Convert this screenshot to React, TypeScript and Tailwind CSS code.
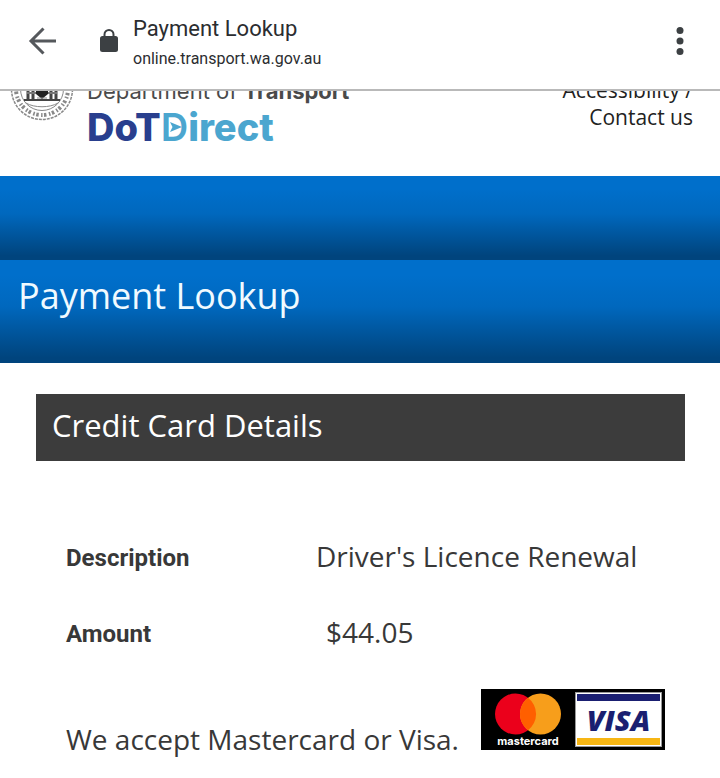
import type { ReactNode } from "react";

const DetailRow = ({
  label,
  children,
}: {
  label: string;
  children: ReactNode;
}) => {
  return (
    <div className="flex h-[76px] items-center">
      <dt className="w-[250px] shrink-0 pt-1 font-['Roboto',sans-serif] text-[24px] font-bold">
        {label}
      </dt>
      <dd>{children}</dd>
    </div>
  );
};

const BrowserBar = () => {
  return (
    <header className="flex h-[91px] items-center border-b-2 border-[#b9b9b9] bg-white pb-2 pl-7 pr-6 font-['Roboto',sans-serif] text-[#2b2d30]">
      <button type="button" aria-label="Back">
        <svg width="28" height="28" viewBox="0 0 28 28" fill="none" stroke="#55585c" strokeWidth="3">
          <path d="M28 14H3M15.500 1.500 3 14l12.500 12.500" />
        </svg>
      </button>
      <svg className="ml-11 shrink-0" width="18" height="24" viewBox="0 0 18 24" aria-hidden="true">
        <path d="M4.500 9V5.500a4.500 4.500 0 0 1 9 0V9" fill="none" stroke="#3c4043" strokeWidth="2" />
        <rect y="7" width="18" height="16" rx="2.500" fill="#3c4043" />
      </svg>
      <div className="ml-[15px] flex-1 pt-1">
        <h1 className="text-[22px] leading-8">Payment Lookup</h1>
        <p className="text-[16px] leading-7">online.transport.wa.gov.au</p>
      </div>
      <button type="button" aria-label="Menu" className="px-3">
        <svg width="8" height="28" viewBox="0 0 8 28" fill="#3c4043">
          <circle cx="4" cy="3.500" r="3.500" />
          <circle cx="4" cy="14" r="3.500" />
          <circle cx="4" cy="24.500" r="3.500" />
        </svg>
      </button>
    </header>
  );
};

const Crest = () => {
  return (
    <svg width="64" height="64" viewBox="0 0 64 64" fill="none" aria-hidden="true">
      <circle cx="32" cy="32" r="30.500" stroke="#888" strokeWidth="1.500" strokeDasharray="3 1" />
      <circle cx="32" cy="32" r="26" stroke="#888" strokeWidth="4" strokeDasharray="1.500 2.500 2.500 1.500" />
      <circle cx="32" cy="32" r="21.500" stroke="#888" strokeWidth="1" />
      <path d="M14 43h36" stroke="#444" strokeWidth="2" />
      <path d="M18 32v10M23 31v11M41 31v11M46 32v10" stroke="#444" strokeWidth="3" />
      <path d="M17 36h9M38 36h9" stroke="#777" strokeWidth="2" />
      <path d="M26 32h12v5l-6 5-6-5z" fill="#222" />
      <path d="M27 41h10M16 46c8 5 24 5 32 0" stroke="#888" strokeWidth="1" />
    </svg>
  );
};

const SiteHeader = () => {
  return (
    <div className="flex h-[85px] items-end justify-between overflow-hidden pl-[10px] pr-[27px]">
      <div className="flex items-end">
        <div className="mb-[55px]">
          <Crest />
        </div>
        <div className="ml-[13px] pb-[29px]">
          <p className="pb-1 text-[22px] leading-6 font-['Inter',sans-serif] text-[#4a4a4a]">
            Department of <b>Transport</b>
          </p>
          <p className="flex font-['Inter',sans-serif] text-[38px] leading-10 font-bold text-[#4ba6cf]">
            <span className="font-extrabold text-[#293f8e]">DoT</span>
            <span className="relative font-semibold">
              D
              <svg className="absolute left-[9px] top-[15px]" width="12" height="10" viewBox="0 0 12 10" aria-hidden="true">
                <path d="M0 0 12 5 0 10l2.500-5z" fill="#4ba6cf" />
              </svg>
            </span>
            <span className="font-extrabold">irect</span>
          </p>
        </div>
      </div>
      <nav className="pb-[45px] text-right text-[21px] leading-[27px] text-[#222]">
        <a href="#accessibility" className="block">Accessibility /</a>
        <a href="#contact" className="block">Contact us</a>
      </nav>
    </div>
  );
};

const CardLogos = () => {
  return (
    <div className="flex h-[61px] w-[184px] bg-black font-['Inter',sans-serif]">
      <div className="flex w-[94px] flex-col items-center pt-1">
        <svg width="66" height="42" viewBox="0 0 66 42" aria-hidden="true">
          <circle cx="20.500" cy="21" r="20.500" fill="#eb001b" />
          <circle cx="45.500" cy="21" r="20.500" fill="#f79e1b" />
          <path d="M33 4.700a20.500 20.500 0 0 1 0 32.600 20.500 20.500 0 0 1 0-32.600z" fill="#ff5f00" />
        </svg>
        <span className="text-[11px] leading-3 font-bold text-white">mastercard</span>
      </div>
      <div className="my-[3px] flex w-[87px] flex-col justify-between border border-[#999] bg-white p-px">
        <div className="h-[7px] bg-[#1a1f71]" />
        <span className="text-center font-['Open_Sans',sans-serif] text-[29px] leading-8 font-extrabold italic text-[#1a1f71]">
          VISA
        </span>
        <div className="h-[7px] bg-[#f7b614]" />
      </div>
    </div>
  );
};

export default function App() {
  return (
    <div className="min-h-screen bg-white font-['Open_Sans','Noto_Sans',sans-serif] text-[#383838]">
      <BrowserBar />
      <SiteHeader />
      <div className="h-[84px] bg-linear-to-b from-[#006fcb] from-15% via-[#0068be] via-45% to-[#00447d] to-95%" />
      <div className="h-[103px] bg-linear-to-b from-[#006fcb] from-15% via-[#0068be] via-45% to-[#00447d] to-95% px-[18px] pt-3">
        <h2 className="text-[36px] leading-[48px] text-[#f0faff]">Payment Lookup</h2>
      </div>
      <main className="pl-9 pr-[35px] pt-[31px]">
        <h3 className="h-[67px] bg-[#3c3c3c] px-4 pt-2 text-[31px] leading-[46px] text-white">
          Credit Card Details
        </h3>
        <dl className="mt-[57px] px-[30px] text-[28px] leading-10">
          <DetailRow label="Description">Driver's Licence Renewal</DetailRow>
          <DetailRow label="Amount">
            <span className="ml-[10px]">$44.05</span>
          </DetailRow>
        </dl>
        <div className="mt-[19px] flex items-start justify-between pl-[30px] pr-5">
          <p className="pt-[30px] text-[28px] leading-10">We accept Mastercard or Visa.</p>
          <CardLogos />
        </div>
      </main>
    </div>
  );
}
